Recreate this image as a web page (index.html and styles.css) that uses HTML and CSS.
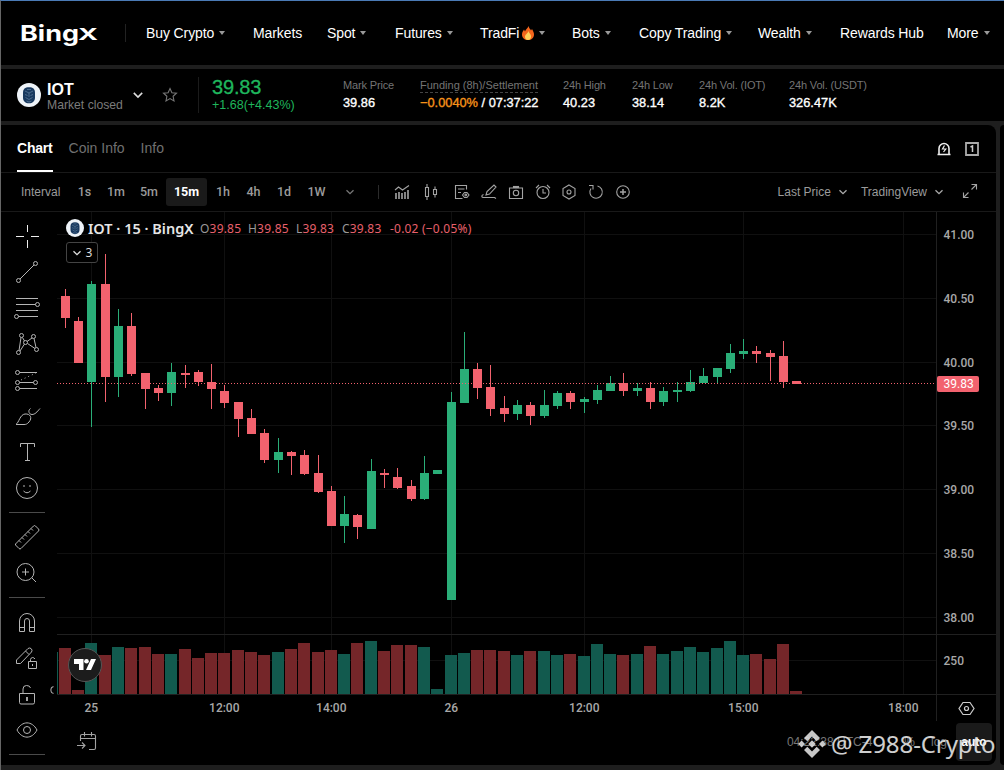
FILE: index.html
```
<!DOCTYPE html>
<html lang="en">
<head>
<meta charset="UTF-8">
<meta name="viewport" content="width=device-width, initial-scale=1.0">
<title>IOT 39.83 | BingX</title>
<link rel="stylesheet" href="styles.css">
</head>
<body>
<svg class="defs" width="0" height="0">
    <symbol id="chev" viewBox="0 0 10 10"><path d="M1.5 3.2L5 6.7l3.5-3.5"/></symbol>
    <symbol id="coin" viewBox="0 0 24 24">
        <circle cx="12" cy="12" r="12" fill="#eef3f8"/>
        <path d="M12 4.200c4 0 6 1.800 6 5.500v5c0 3.500-2.500 5.500-6 5.500s-6-2-6-5.500v-5c0-3.700 2-5.500 6-5.500z" fill="#18395f"/>
        <path d="M8 8l4 2 4-2M8 11.500l2.500 1M16 11.500l-2.500 1M12 10v4M8.500 14.500l3.500 2 3.500-2M10 6.500h4M9.500 18l2.500 1 2.500-1" fill="none" stroke="#6f8fae" stroke-width=".6"/>
    </symbol>
</svg>

<header class="nav">
    <svg class="logo" width="80" height="32" viewBox="0 0 80 32">
        <text x="-1" y="24" font-size="22" textLength="59" lengthAdjust="spacingAndGlyphs">Bing</text>
        <text x="57" y="23" font-size="16.500" textLength="20" lengthAdjust="spacingAndGlyphs">X</text>
    </svg>
    <nav class="menu">
        <a class="drop">Buy Crypto</a>
        <a>Markets</a>
        <a class="drop">Spot</a>
        <a class="drop">Futures</a>
        <a class="drop fire">TradFi<svg width="12" height="14" viewBox="0 0 12 14"><path d="M6.500 0c.5 2.500 2 3 2.500 4.500L10 3c1.500 2.500 2 4 2 5.500 0 3.500-2.500 5.500-6 5.500S0 12 0 8.500C0 6.500 1 5 2 3.500l1 2C3.500 3 6 2.500 6.500 0z" fill="#f4651c"/><path d="M6.300 5c.4 2 2.700 3 2.700 5.500S7.500 14 6 14s-3-1-3-3.300C3 8.500 6 7.500 6.300 5z" fill="#ffd25a"/></svg></a>
        <a class="drop">Bots</a>
        <a class="drop">Copy Trading</a>
        <a class="drop">Wealth</a>
        <a>Rewards Hub</a>
        <a class="drop">More</a>
    </nav>
</header>

<section class="ticker">
    <svg class="coin" width="24" height="24"><use href="#coin"/></svg>
    <div class="pair"><b>IOT</b><span>Market closed</span></div>
    <svg class="chev" width="12" height="12"><use href="#chev"/></svg>
    <svg class="star" width="16" height="16" viewBox="0 0 16 16"><path d="M8 1.500l1.900 4.200 4.600.5-3.400 3.100.9 4.600L8 11.600l-4 2.300.9-4.600L1.500 6.200l4.600-.5z"/></svg>
    <div class="price"><b>39.83</b><span>+1.68(+4.43%)</span></div>
    <div class="stats">
        <div><label>Mark Price</label><b>39.86</b></div>
        <div><label class="dash">Funding (8h)/Settlement</label><b><i>−0.0040%</i> / 07:37:22</b></div>
        <div><label>24h High</label><b>40.23</b></div>
        <div><label>24h Low</label><b>38.14</b></div>
        <div><label>24h Vol. (IOT)</label><b>8.2K</b></div>
        <div><label>24h Vol. (USDT)</label><b>326.47K</b></div>
    </div>
</section>

<div class="row">
<main class="panel">
    <div class="tabs">
        <a class="active">Chart</a>
        <a>Coin Info</a>
        <a>Info</a>
        <div class="tabs-right">
            <svg width="16" height="16" viewBox="0 0 16 16"><path d="M3 13.200V7.500a5 5 0 0 1 10 0v5.700M1.500 13.500h13" stroke="#eee" stroke-width="1.600"/><path d="M8.500 4.500L6.500 8h3.300L7.500 11" stroke="#eee" stroke-width="1.200"/></svg>
            <svg width="16" height="16" viewBox="0 0 16 16"><path d="M2 2h12v12H2z" stroke="#aaa" stroke-width="1.800"/><path d="M6.500 6l2-1v6" stroke="#ccc" stroke-width="1.500"/></svg>
        </div>
    </div>

    <div class="toolbar">
        <div class="intervals">
            <span class="label">Interval</span>
            <span>1s</span><span>1m</span><span>5m</span><span class="on">15m</span><span>1h</span><span>4h</span><span>1d</span><span>1W</span>
            <span><svg class="chev dim" width="10" height="10"><use href="#chev"/></svg></span>
            <span><i class="bar"></i></span>
            <span><svg width="16" height="16" viewBox="0 0 16 16"><path d="M1 6l3.500-3 4 3L15 1.500"/><path stroke-width="1.600" d="M2 15V9M5 15V8M8 15v-6M11 15V8M14 15V6"/></svg></span>
            <span><svg width="16" height="16" viewBox="0 0 16 16"><path d="M2.500 3.500h3v9h-3zM4 0v3.500M4 12.500V16M10.500 5.500h3v5h-3zM12 2.500v3M12 10.500v3"/></svg></span>
            <span><svg width="16" height="16" viewBox="0 0 16 16"><path d="M12.500 5.500v-4h-11v13h7M4 5h6.500M4 8.500h3M8.500 11l2-2.500h2.500l2 2.500-2 2.500h-2.500z"/><circle cx="11.800" cy="11" r=".9"/></svg></span>
            <span><svg width="16" height="16" viewBox="0 0 16 16"><path d="M5 11l1-3.500 7-6.500 2 2-6.500 7zM2.500 10.500c-2.500 1-2 3 0 3h11l1.500 1"/></svg></span>
            <span><svg width="16" height="16" viewBox="0 0 16 16"><path d="M1.500 4h13v10.500h-13z"/><path d="M5.500 2.500h5v1h-5z"/><circle cx="8" cy="9" r="2.700"/></svg></span>
            <span><svg width="16" height="16" viewBox="0 0 16 16"><circle cx="8" cy="8.500" r="6"/><path d="M8 5v4h3M1 4l3-3M15 4l-3-3"/></svg></span>
            <span><svg width="16" height="16" viewBox="0 0 16 16"><path d="M8 1l6 3.500v7L8 15l-6-3.500v-7z"/><circle cx="8" cy="8" r="2"/></svg></span>
            <span><svg width="16" height="16" viewBox="0 0 16 16"><path d="M9.500 2a6.200 6.200 0 1 1-6.500 2.500M1 1.500h4v4"/></svg></span>
            <span><svg width="16" height="16" viewBox="0 0 16 16"><circle cx="8" cy="8" r="6.300"/><path stroke-width="1.500" d="M8 5v6M5 8h6"/></svg></span>
        </div>
        <div class="views">
            <span>Last Price</span><svg class="chev" width="10" height="10"><use href="#chev"/></svg>
            <span>TradingView</span><svg class="chev" width="10" height="10"><use href="#chev"/></svg>
            <svg class="expand" width="16" height="16" viewBox="0 0 16 16"><path d="M9.500 1.500h5v5M14.500 1.500l-5 5M1.500 9.500v5h5M1.500 14.500l5-5"/></svg>
        </div>
    </div>

    <div class="work">
        <aside class="tools">
            <svg viewBox="0 0 28 28"><path stroke="#eee" d="M3 14.500h8M18 14.500h8M14.500 3v7M14.500 18v8"/></svg>
            <svg viewBox="0 0 28 28"><circle cx="22.500" cy="5.500" r="2"/><circle cx="5.500" cy="22.500" r="2"/><path d="M7 21L21 7"/></svg>
            <svg viewBox="0 0 28 28"><path d="M3 4.500h22M3 10.500h19.500M3 16.500h22M5.500 22.500H25"/><circle cx="24.500" cy="10.500" r="2"/><circle cx="3.500" cy="22.500" r="2"/></svg>
            <svg viewBox="0 0 28 28"><circle cx="8.500" cy="5.500" r="2"/><circle cx="20.500" cy="6.500" r="2"/><circle cx="12.500" cy="12.500" r="2"/><circle cx="5.500" cy="22.500" r="2"/><circle cx="23.500" cy="19.500" r="2"/><path d="M8 7.500l-2 13M9.500 7.500l2 3.500M14 11.500L19 8M14.500 13.500l7.500 5M21 8.500l2 9M7 21l4.500-7"/></svg>
            <svg viewBox="0 0 28 28"><circle cx="4.500" cy="6.500" r="2"/><circle cx="4.500" cy="16.500" r="2"/><circle cx="22.500" cy="16.500" r="2"/><circle cx="4.500" cy="22.500" r="2"/><path d="M6.500 6.500H24M6.500 16.500h14M6.500 22.500H24"/><path stroke-dasharray="1 3" d="M8 14l15-7"/></svg>
            <svg viewBox="0 0 28 28"><path d="M3 22.500c3-2 4-10 9-10.500 5.500-.5 7.500 4 4 8-2 2.200-3 2.500-5 2.500zM27 6.500c-3 3.500-5 6-8 6s-4.500-4-1.500-6"/></svg>
            <svg viewBox="0 0 28 28"><path d="M7.500 9V5.500h14V9M14.500 5.500v17M12 22.500h5"/></svg>
            <svg viewBox="0 0 28 28"><circle cx="14" cy="14" r="10.500"/><path d="M11 11v2M17 11v2M10.500 17q3.500 3.500 7 0"/></svg>
            <hr>
            <svg viewBox="0 0 28 28"><path d="M2.500 21L20.500 3Q21.500 2 22.500 3l3 3q1 1 0 2L8 25.500q-1 1-2 0l-3.500-3.500zM6 17.500l2 2M9 14.500l2 2M12 11.500l2 2M15 8.500l2 2M18 5.500l2 2"/></svg>
            <svg viewBox="0 0 28 28"><circle cx="12.500" cy="13" r="8.500"/><path d="M19 19l4 4M9 13h7M12.500 9.500v7"/></svg>
            <hr>
            <svg viewBox="0 0 28 28"><path d="M6.500 23.500V13a7.500 7.500 0 0 1 15 0v10.500h-5V13a2.500 2.500 0 0 0-5 0v10.500zM6.500 19.500h5M16.500 19.500h5"/></svg>
            <svg viewBox="0 0 28 28"><path d="M3.500 16L15 4.500q1.500-1 3 0l.5.500q1 1.500 0 3L7.500 19.500h-4zM12.500 7l3.500 3.500M15.500 17.500h8v7h-8zM17.500 17.500v-2q.5-2 2-2t2.500 1.500M19.500 20v2"/></svg>
            <svg viewBox="0 0 28 28"><path d="M6.500 13.500h15v9q0 1.500-1.500 1.500H8q-1.500 0-1.500-1.500zM10 13.500V9q0-3.500 3.500-3.500T17.500 8"/><path stroke-width="1.800" d="M14 17v4"/></svg>
            <svg viewBox="0 0 28 28"><path d="M4 14C9 4.500 19 4.500 24 14 19 23.500 9 23.500 4 14z"/><circle cx="14" cy="14" r="3.500"/></svg>
            <hr>
        </aside>

        <div class="chart">
            <svg id="plot" width="939" height="513" viewBox="57 212 939 513"></svg>
            <svg class="collapse" width="4" height="8" viewBox="0 0 4 8"><path d="M3.500.5Q.500 1.500 1 4q-.5 2.500 2.500 3.500"/></svg>
            <div class="legend">
                <svg class="coin" width="18" height="18" viewBox="0 0 24 24"><use href="#coin"/></svg>
                <b>IOT · 15 · BingX</b>
                <span>O<i>39.85</i></span><span>H<i>39.85</i></span><span>L<i>39.83</i></span><span>C<i>39.83</i></span><span class="chg"><i>-0.02 (−0.05%)</i></span>
            </div>
            <div class="fold"><svg class="chev" width="10" height="10"><use href="#chev"/></svg>3</div>
            <div class="tv">
                <svg width="22" height="12" viewBox="0 0 22 12"><path d="M0 0h9.500v11H5V5H0zM17 0h5l-5 11h-5z"/><circle cx="12.500" cy="2.300" r="2.300"/></svg>
            </div>
            <div class="bottom">
                <svg class="goto" width="22" height="22" viewBox="0 0 22 22"><path d="M4.500 10V5q0-1.500 1.500-1.500h12q1.500 0 1.500 1.500v12q0 1.500-1.500 1.500h-5M4.500 7.500h15M8.500 1v4.500M15.500 1v4.500M1 14.500h8M6 11.500l3 3-3 3"/></svg>
                <span class="clock">04:22:38 UTC-4</span>
                <i class="bar"></i>
                <span class="pct">%</span>
                <span class="log">log</span>
                <span class="auto">auto</span>
            </div>
        </div>
    </div>
</main>
<div class="next"></div>
</div>

<div class="watermark">
    <svg width="28" height="28" viewBox="0 0 28 28"><path d="M14 0l8 8-3.300 3.300L14 6.600l-4.700 4.700L6 8zM14 28l8-8-3.300-3.300-4.700 4.700-4.700-4.700L6 20zM14 10.200l3.800 3.800-3.800 3.800-3.800-3.800zM3.600 10.600L7 14l-3.400 3.400L.2 14zM24.400 10.600l3.400 3.400-3.400 3.400L21 14z"/></svg>
    <span>@ Z988-Crypto</span>
</div>

<script src="chart.js"></script>
</body>
</html>
```
FILE: styles.css
```
* {
box-sizing: border-box;
}
body {
margin: 0;
width: 1004px;
height: 770px;
overflow: hidden;
background: #1e1e1e;
border-top: 1px solid #4a7ab5;
border-left: 1px solid #666;
font-family: "Liberation Sans", Arial, sans-serif;
color: #fff;
position: relative;
}
svg {
display: block;
flex: none;
fill: none;
stroke: #a3a3a3;
stroke-width: 1.1;
}
.defs {
position: absolute;
}
i {
font-style: normal;
}
.chev {
stroke: #ddd;
stroke-width: 1.3;
}
.chev.dim {
stroke: #777;
}
.coin {
stroke: none;
}

/* top menu */
.nav {
height: 64px;
background: #000;
display: flex;
align-items: center;
padding-left: 20px;
}
.logo {
font-family: Inter, sans-serif;
font-weight: 700;
fill: #fff;
stroke: none;
}
.menu {
margin-left: 24px;
padding-left: 20px;
display: grid;
grid-template-columns: 107px 74px 68px 85px 92px 67px 119px 82px 107px 56px;
align-items: center;
font-size: 14px;
letter-spacing: -.1px;
height: 18px;
white-space: nowrap;
border-left: 1px solid #222;
}
.menu a {
display: flex;
align-items: center;
}
.drop::after {
content: "";
border: 3.5px solid transparent;
border-top: 4px solid #999;
border-bottom: 0;
margin-left: 5px;
}
.fire svg {
stroke: none;
margin-left: 3px;
}

/* ticker */
.ticker {
margin-top: 4px;
height: 52px;
background: #000;
display: flex;
align-items: center;
padding-left: 16px;
}
.pair, .price {
display: flex;
flex-direction: column;
}
.pair {
width: 76px;
margin: 3px 0 0 6px;
white-space: nowrap;
}
.pair b {
font-size: 16px;
line-height: 16px;
}
.pair span {
font-size: 12.2px;
line-height: 14px;
color: #7b7b7b;
}
.ticker .chev {
margin-left: 9px;
}
.star {
margin-left: 18px;
stroke: #777;
}
.price {
margin-left: 20px;
padding-left: 13px;
height: 36px;
width: 145px;
border-left: 1px solid #1b1b1b;
color: #1fb65c;
}
.price b {
font-weight: normal;
font-size: 20px;
line-height: 20px;
letter-spacing: -.15px;
-webkit-text-stroke: .3px;
}
.price span {
font-size: 12.5px;
line-height: 16px;
}
.stats {
display: grid;
grid-template-columns: 77px 143px 69px 67px 90px 100px;
white-space: nowrap;
margin-top: -2px;
}
.stats label {
display: table;
font-size: 11px;
line-height: 14px;
letter-spacing: -.15px;
color: #747474;
margin-bottom: 2px;
}
.stats .dash {
letter-spacing: 0;
border-bottom: 1px dashed #444;
margin-bottom: 1px;
}
.stats b {
display: block;
font-size: 12.8px;
line-height: 17px;
font-weight: normal;
-webkit-text-stroke: .35px;
}
.stats i {
color: #f7931a;
}

/* chart panel */
.row {
display: flex;
margin-top: 4px;
gap: 4px;
height: 640px;
}
.panel {
width: 995px;
background: #000;
border-radius: 0 8px 8px 0;
}
.next {
flex: 1;
background: #000;
border-radius: 8px 0 0 8px;
}
.tabs {
height: 48px;
border-bottom: 1px solid #191919;
display: flex;
align-items: center;
gap: 16px;
padding: 0 16px;
font-size: 14px;
color: #707070;
}
.tabs a {
height: 47px;
line-height: 46px;
}
.tabs .active {
color: #fff;
font-weight: bold;
letter-spacing: -.2px;
border-bottom: 2px solid #fff;
}
.tabs-right {
margin-left: auto;
display: flex;
gap: 12px;
}
.toolbar {
height: 39px;
border-bottom: 1px solid #191919;
display: flex;
align-items: center;
justify-content: space-between;
color: #9b9b9b;
font-size: 12px;
}
.intervals {
display: grid;
grid-template-columns: 48px 31px 32px 34px 41px 32px 29px 32px 33px 34px 22px 26px 32px 29px 26px 28px 25px 27px 28px 26px;
margin-left: 20px;
align-items: center;
justify-items: center;
font: 500 12.5px Roboto, sans-serif;
}
.intervals span {
height: 28px;
display: flex;
align-items: center;
padding-bottom: 1px;
}
.intervals .label {
justify-self: start;
font: 12px "Liberation Sans", sans-serif;
}
.intervals .on {
background: #1a1a1a;
border-radius: 3px;
color: #fff;
font-weight: 700;
width: 41px;
justify-content: center;
}
.bar {
width: 1px;
height: 14px;
background: #2b2b2b;
}
.views {
display: flex;
align-items: center;
margin-right: 18px;
}
.views .chev {
margin: 0 13px 0 7px;
stroke: #aaa;
}
.views .expand {
margin: -3px 0 0 5px;
}
.work {
display: flex;
}
.tools {
width: 56px;
padding: 10px 0 0 8px;
display: flex;
flex-direction: column;
}
.tools svg {
width: 28px;
height: 28px;
margin: 0 4px 8px;
stroke: #b5b5b5;
stroke-width: 1;
}
.tools hr {
width: 36px;
height: 1px;
border: 0;
background: #4a4a4a;
margin: 2px 0 10px;
}
.chart {
position: relative;
}
#plot {
stroke: none;
}
#plot text {
font: 500 12px Roboto, sans-serif;
fill: #a8a8a8;
}
#plot .grid {
stroke: #101010;
stroke-width: 1;
}
#plot .edge {
stroke: #202020;
}
#plot .up {
fill: #2aae78;
}
#plot .down {
fill: #f2626e;
}
#plot .vup {
fill: #125a4e;
}
#plot .vdown {
fill: #752629;
}
#plot .last {
stroke: #f2626e;
stroke-dasharray: 1 2;
}
#plot .tag {
fill: #fff;
font-weight: 400;
}
#plot .gear {
fill: none;
stroke: #ccc;
stroke-width: 1.2;
}
.collapse {
position: absolute;
left: -7px;
top: 474px;
}
.legend {
position: absolute;
left: 9px;
top: 6px;
display: flex;
align-items: center;
white-space: nowrap;
font: 12px "Noto Sans", sans-serif;
letter-spacing: .2px;
color: #999;
}
.legend b {
font-size: 14.5px;
font-weight: 600;
letter-spacing: 0;
color: #e6e6e6;
width: 112px;
margin-left: 4px;
}
.legend i {
color: #e8606c;
}
.legend span {
width: 48px;
}
.legend span:nth-of-type(3) {
width: 46px;
}
.fold {
position: absolute;
left: 9px;
top: 30px;
width: 32px;
height: 21px;
border: 1px solid #444;
border-radius: 3px;
background: #000;
display: flex;
align-items: center;
justify-content: center;
gap: 4px;
font: 12px "Noto Sans", sans-serif;
color: #ddd;
}
.tv {
position: absolute;
left: 11px;
top: 436px;
width: 34px;
height: 34px;
border: 1px solid #555;
border-radius: 50%;
background: #1c1c1c;
display: flex;
align-items: center;
justify-content: center;
}
.tv svg {
fill: #fff;
stroke: none;
}
.bottom {
height: 40px;
margin-top: -3px;
display: flex;
align-items: center;
font-size: 12px;
color: #777;
padding: 0 4px 0 19px;
}
.clock {
margin-left: auto;
}
.bottom .bar {
margin-left: 17px;
}
.pct {
margin-left: 14px;
}
.log {
margin-left: 16px;
}
.auto {
margin-left: 9px;
width: 36px;
height: 38px;
line-height: 38px;
text-align: center;
background: #1a1a1a;
border-radius: 4px;
color: #fff;
font-weight: bold;
}
.watermark {
position: absolute;
left: 797px;
top: 728px;
display: flex;
align-items: center;
gap: 5px;
font: 24px/30px "Noto Sans", sans-serif;
letter-spacing: -.1px;
color: #e6e6e6;
white-space: nowrap;
opacity: .9;
}
.watermark svg {
fill: #ddd;
stroke: none;
}
```
FILE: chart.js
```
// color, high, body top, body bottom, low, volume top
const candles = [
    ["r", 289, 296, 318, 328, 648], ["r", 317, 321, 363, 363, 690], ["g", 281, 284, 382, 427, 643],
    ["r", 254, 284, 377, 402, 655], ["g", 309, 326, 377, 397, 647], ["r", 313, 326, 374, 376, 648],
    ["r", 373, 373, 389, 409, 647], ["r", 385, 388, 393, 401, 654], ["g", 363, 372, 393, 406, 654],
    ["r", 365, 373, 375, 388, 649], ["r", 370, 372, 382, 386, 658], ["r", 364, 382, 389, 409, 653],
    ["r", 385, 391, 403, 408, 653], ["r", 402, 402, 419, 437, 650], ["r", 409, 418, 434, 434, 652],
    ["r", 429, 433, 460, 463, 655], ["g", 438, 452, 460, 473, 652], ["r", 451, 452, 456, 475, 649],
    ["r", 450, 455, 474, 475, 643], ["r", 455, 473, 492, 493, 652], ["r", 486, 491, 526, 526, 650],
    ["g", 496, 514, 526, 543, 654], ["r", 514, 515, 527, 539, 643], ["g", 459, 471, 529, 529, 641],
    ["r", 469, 473, 475, 488, 651], ["r", 468, 477, 488, 489, 645], ["r", 480, 486, 499, 501, 645],
    ["g", 456, 473, 499, 500, 647], ["g", 470, 470, 474, 474, 689], ["g", 392, 402, 600, 600, 655],
    ["g", 332, 369, 403, 403, 653], ["r", 363, 369, 388, 399, 650], ["r", 365, 387, 409, 416, 650],
    ["r", 396, 408, 414, 422, 651], ["g", 400, 405, 414, 420, 655], ["r", 402, 405, 416, 425, 651],
    ["g", 390, 405, 416, 418, 651], ["g", 391, 393, 406, 409, 655], ["r", 391, 393, 402, 409, 654],
    ["g", 397, 399, 402, 413, 656], ["g", 385, 390, 400, 404, 644], ["g", 376, 383, 391, 391, 654],
    ["r", 373, 383, 391, 396, 655], ["g", 383, 388, 391, 396, 654], ["r", 382, 388, 402, 409, 646],
    ["g", 387, 391, 402, 406, 654], ["g", 382, 390, 392, 402, 651], ["g", 370, 382, 391, 392, 647],
    ["g", 368, 376, 383, 383, 652], ["g", 368, 368, 377, 383, 648], ["g", 344, 353, 369, 373, 641],
    ["g", 339, 351, 354, 359, 655], ["r", 346, 351, 354, 363, 654], ["r", 350, 353, 357, 381, 659],
    ["r", 341, 356, 382, 388, 644], ["r", 381, 381, 384, 384, 691]
];
const prices = [["41.00", 234], ["40.50", 298], ["40.00", 362], ["39.50", 425], ["39.00", 489], ["38.50", 553], ["38.00", 617], ["250", 660]];
const times = [["25", 91], ["12:00", 224], ["14:00", 331], ["26", 451], ["12:00", 584], ["15:00", 743], ["18:00", 903]];

function rect(cls, x, y, w, h) {
    return `<rect class="${cls}" x="${x}" y="${y}" width="${w}" height="${h}"/>`;
}
function line(cls, x1, y1, x2, y2) {
    return `<path class="${cls}" d="M${x1} ${y1}L${x2} ${y2}"/>`;
}

let out = "";
prices.forEach(([label, y]) => {
    out += line("grid", 57, y + .5, 936, y + .5);
    out += `<text x="943.5" y="${y + 4.5}">${label}</text>`;
});
times.forEach(([label, x]) => {
    out += line("grid", x + .5, 212, x + .5, 694);
    out += `<text x="${x + .3}" y="712" text-anchor="middle">${label}</text>`;
});
out += line("grid edge", 57, 634.5, 996, 634.5);
out += line("grid edge", 57, 694.5, 996, 694.5);
out += line("grid edge", 936.5, 212, 936.5, 721);

out += rect("vup", 57, 652, 1, 42);
candles.forEach(([c, high, top, bottom, low, vol], i) => {
    const x = Math.floor(61.31 + 13.3 * i);
    const cls = c === "g" ? "up" : "down";
    out += rect("v" + cls, x - 2, vol, 12, 694 - vol);
    out += rect(cls, x + 4, high, 1, low - high);
    out += rect(cls, x, top, 9, bottom - top);
});

// last price
out += line("last", 57, 383.5, 936, 383.5);
out += `<rect class="down" x="937" y="376" width="42" height="16" rx="2"/>`;
out += `<text class="tag" x="943.5" y="388">39.83</text>`;
out += `<path class="gear" d="M963 702.500h7l4 6-4 6h-7l-4-6z"/><circle class="gear" cx="966.500" cy="708.500" r="2"/>`;

document.getElementById("plot").innerHTML = out;
```
